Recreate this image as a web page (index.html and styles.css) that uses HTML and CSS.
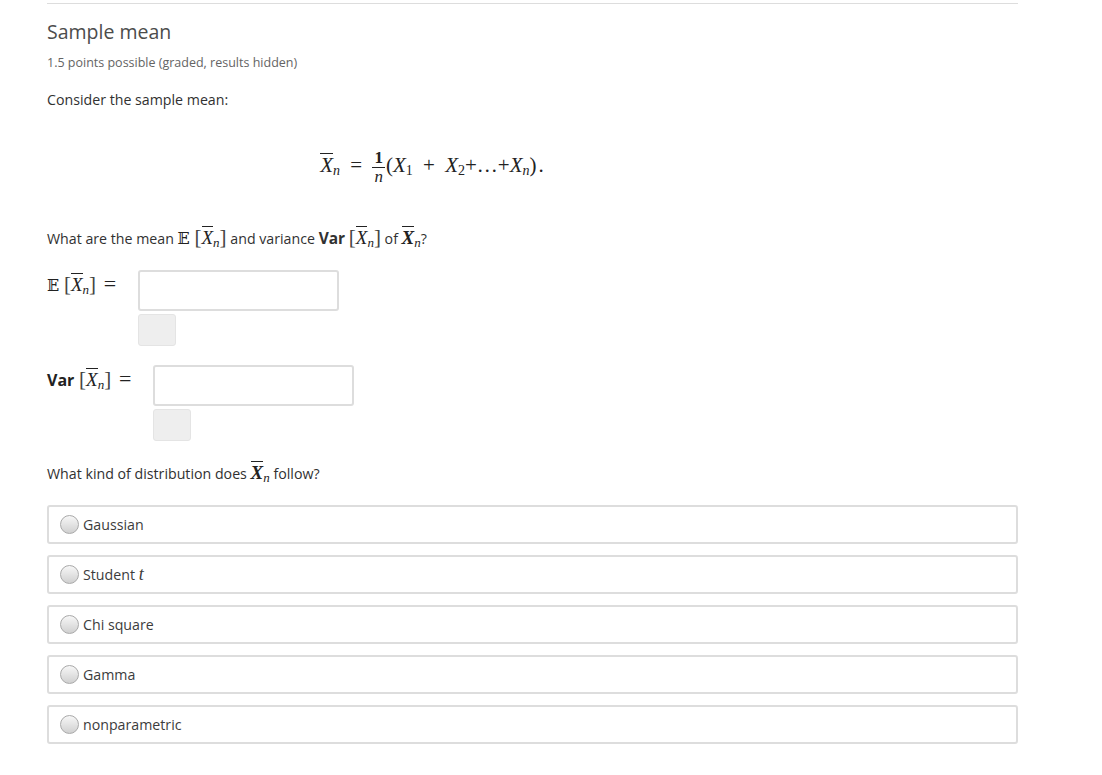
FILE: index.html
```html
<!DOCTYPE html>
<html lang="en">
<head>
    <meta charset="UTF-8">
    <title>Sample mean</title>
    <link rel="stylesheet" href="styles.css">
</head>
<body>
    <div class="problem">
        <h2 class="title">Sample mean</h2>
        <div class="points">1.5 points possible (graded, results hidden)</div>

        <p class="text">Consider the sample mean:</p>

        <div class="display">
            <span class="math big">
                <span class="mi bar">X</span><sub class="mi">n</sub>
                <span class="op">=</span>
                <span class="frac"><span class="num">1</span><span class="den mi">n</span></span>(<span class="mi">X</span><sub>1</sub> <span class="op">+</span> <span class="mi">X</span><sub>2</sub>+…+<span class="mi">X</span><sub class="mi">n</sub>)<span class="dot">.</span>
            </span>
        </div>

        <p class="text question">What are the mean
            <span class="math"><span class="bb">𝔼</span> <span class="br">[</span><span class="mi bar">X</span><sub class="mi">n</sub><span class="br">]</span></span>
            and variance <b class="var">Var</b>
            <span class="math"><span class="br">[</span><span class="mi bar">X</span><sub class="mi">n</sub><span class="br">]</span></span>
            of <span class="math"><b class="mi bar">X</b><sub class="mi">n</sub></span>?</p>

        <div class="answer">
            <span class="math label"><span class="bb">𝔼</span> <span class="br">[</span><span class="mi bar">X</span><sub class="mi">n</sub><span class="br">]</span> <span class="op eq">=</span></span>
            <div class="field">
                <input class="entry" type="text">
                <div class="preview"></div>
            </div>
        </div>

        <div class="answer">
            <span class="math label"><b class="sans">Var</b> <span class="br">[</span><span class="mi bar">X</span><sub class="mi">n</sub><span class="br">]</span> <span class="op eq">=</span></span>
            <div class="field">
                <input class="entry" type="text">
                <div class="preview"></div>
            </div>
        </div>

        <p class="text question2">What kind of distribution does <span class="math"><b class="mi bar">X</b><sub class="mi">n</sub></span> follow?</p>

        <div class="choices">
            <label class="choice"><span class="radio"></span>Gaussian</label>
            <label class="choice"><span class="radio"></span>Student&nbsp;<span class="mi t">t</span></label>
            <label class="choice"><span class="radio"></span>Chi square</label>
            <label class="choice"><span class="radio"></span>Gamma</label>
            <label class="choice"><span class="radio"></span>nonparametric</label>
        </div>
    </div>
</body>
</html>
```

FILE: styles.css
```css
* {
    box-sizing: border-box;
    margin: 0;
    padding: 0;
}

body {
    font-family: 'Open Sans', 'Liberation Sans', sans-serif;
    background-color: #fff;
    color: #313131;
    padding: 3px 0 0 47px;
}

.problem {
    width: 971px;
    border-top: 1px solid #ddd;
}

.title {
    font-size: 19.5px;
    font-weight: normal;
    color: #4c4c4c;
    margin-top: 15px;
    line-height: 26px;
}
.points {
    font-size: 12.5px;
    color: #646464;
    margin-top: 9px;
}
.text {
    font-size: 14.2px;
    margin-top: 19px;
}

/* maths */
.math {
    font-family: 'Liberation Serif', 'DejaVu Serif', serif;
    font-size: 19px;
    color: #222;
    white-space: nowrap;
}
.math sub {
    font-size: 13px;
    vertical-align: -3px;
    line-height: 0;
}
.mi {
    font-style: italic;
}
.bar {
    display: inline-block;
    border-top: 1px solid #222;
    line-height: 1;
    padding-top: 1px;
}
.op {
    margin: 0 5px;
}
.eq {
    font-size: 22px;
    margin: 0 3px;
}
.br {
    color: #444;
    font-size: 21px;
}
.bb {
    font-family: 'DejaVu Serif', serif;
    font-size: 16px;
}
.sans {
    font-family: 'Open Sans', sans-serif;
    font-weight: bold;
    font-size: 16px;
}
.var {
    font-size: 15.5px;
}

.display {
    width: 770px;
    text-align: center;
    margin-top: 40px;
    height: 40px;
}
.big {
    font-size: 21px;
}
.big sub {
    font-size: 14px;
}
.frac {
    display: inline-flex;
    flex-direction: column;
    align-items: center;
    vertical-align: middle;
    font-size: 17px;
    line-height: 18px;
    margin-right: 1px;
}
.frac .num {
    border-bottom: 1px solid #222;
    padding: 0 2px;
    font-weight: bold;
}
.dot {
    margin-left: 2px;
}

.question {
    margin-top: 36px;
}

.answer {
    display: flex;
    align-items: flex-start;
    margin-top: 20px;
}
.answer + .answer {
    margin-top: 19px;
}
.label {
    padding-top: 1px;
    margin-right: 19px;
}
.field {
    display: flex;
    flex-direction: column;
}
.entry {
    width: 201px;
    height: 41px;
    border: 2px solid #ddd;
    border-radius: 3px;
    background: #fff;
}
.preview {
    width: 38px;
    height: 32px;
    margin-top: 3px;
    background-color: #eee;
    border: 1px solid #e4e4e4;
    border-radius: 3px;
}

.question2 {
    margin-top: 20px;
}

.choices {
    margin-top: 21px;
}
.choice {
    display: flex;
    align-items: center;
    height: 39px;
    border: 2px solid #ddd;
    border-radius: 3px;
    padding-left: 11px;
    margin-bottom: 11px;
    font-size: 14.2px;
    color: #3c3c3c;
}
.radio {
    width: 19px;
    height: 19px;
    border-radius: 50%;
    border: 1px solid #a9a9a9;
    background: linear-gradient(#f7f7f7, #d0d0d0);
    margin-right: 4px;
}
.t {
    font-family: 'Liberation Serif', serif;
    font-size: 18px;
}
```
